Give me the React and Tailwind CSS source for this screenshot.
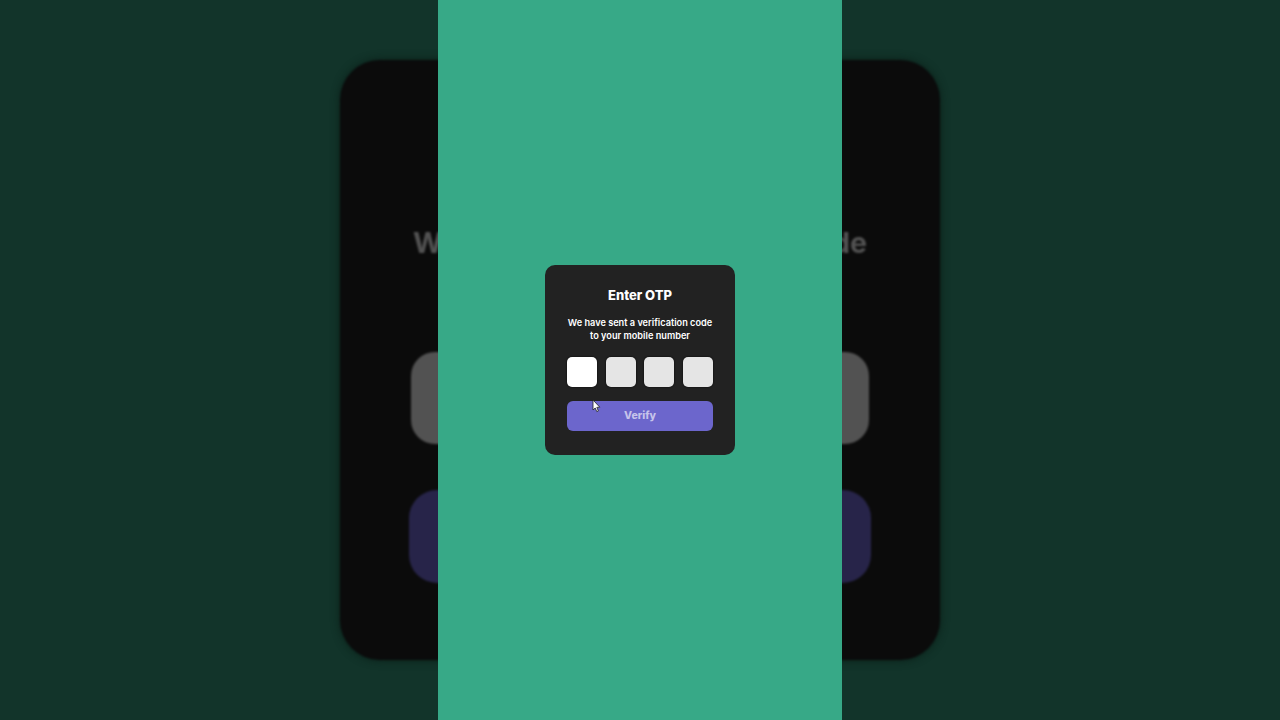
import React from "react";

function Cursor() {
  return (
    <svg className="absolute left-[25px] top-[-2px]" width="9" height="14" viewBox="0 0 9 14">
      <path d="M1 1 L1 11 L3.2 9 L4.8 12.6 L6.4 11.9 L4.8 8.4 L7.8 8.2 Z" fill="#fff" stroke="#222" strokeWidth="0.8" />
    </svg>
  );
}

export default function App() {
  return (
    <div className="relative h-screen w-full overflow-hidden bg-[#12342a] font-['Inter','Liberation_Sans',sans-serif]">
      <div className="flex h-full items-center justify-center blur-[1px]">
        <div className="flex h-[600px] w-[600px] flex-col items-center rounded-[40px] bg-[#0b0b0b] pt-[163px] shadow-[0_0_8px_#0a1f18]">
          <p className="whitespace-nowrap text-[28.6px] leading-[40px] font-bold text-[#525252]">We have sent a verification code</p>
          <div className="mt-[89px] h-[92px] w-[458px] rounded-[24px] bg-[#525252]" />
          <div className="mt-[46px] h-[93px] w-[462px] rounded-[28px] bg-[#272449]" />
        </div>
      </div>

      <div className="absolute inset-y-0 left-[438px] flex w-[404px] items-center justify-center bg-[#37a987]">
        <div className="flex h-[190px] w-[190px] flex-col items-center rounded-[10px] bg-[#222222] pt-[21px]">
          <h1 className="text-[13px] leading-[18px] font-extrabold text-white">Enter OTP</h1>
          <p className="mt-[13px] text-center text-[9.2px] leading-[12.5px] font-semibold text-white">
            We have sent a verification code
            <br />
            to your mobile number
          </p>
          <div className="mt-[15px] flex w-[146px] justify-between">
            <div className="h-[30px] w-[30px] rounded-[5px] bg-white shadow-[0_0_2px_#000000]" />
            <div className="h-[30px] w-[30px] rounded-[5px] bg-[#e5e5e5] shadow-[0_0_2px_#000000]" />
            <div className="h-[30px] w-[30px] rounded-[5px] bg-[#e5e5e5] shadow-[0_0_2px_#000000]" />
            <div className="h-[30px] w-[30px] rounded-[5px] bg-[#e5e5e5] shadow-[0_0_2px_#000000]" />
          </div>
          <div className="relative mt-[14px] flex h-[30px] w-[146px] items-center justify-center rounded-[6px] bg-[#6c66cc]">
            <Cursor />
            <span className="text-[10.5px] font-extrabold text-[#c6c3ea]">Verify</span>
          </div>
        </div>
      </div>
    </div>
  );
}
